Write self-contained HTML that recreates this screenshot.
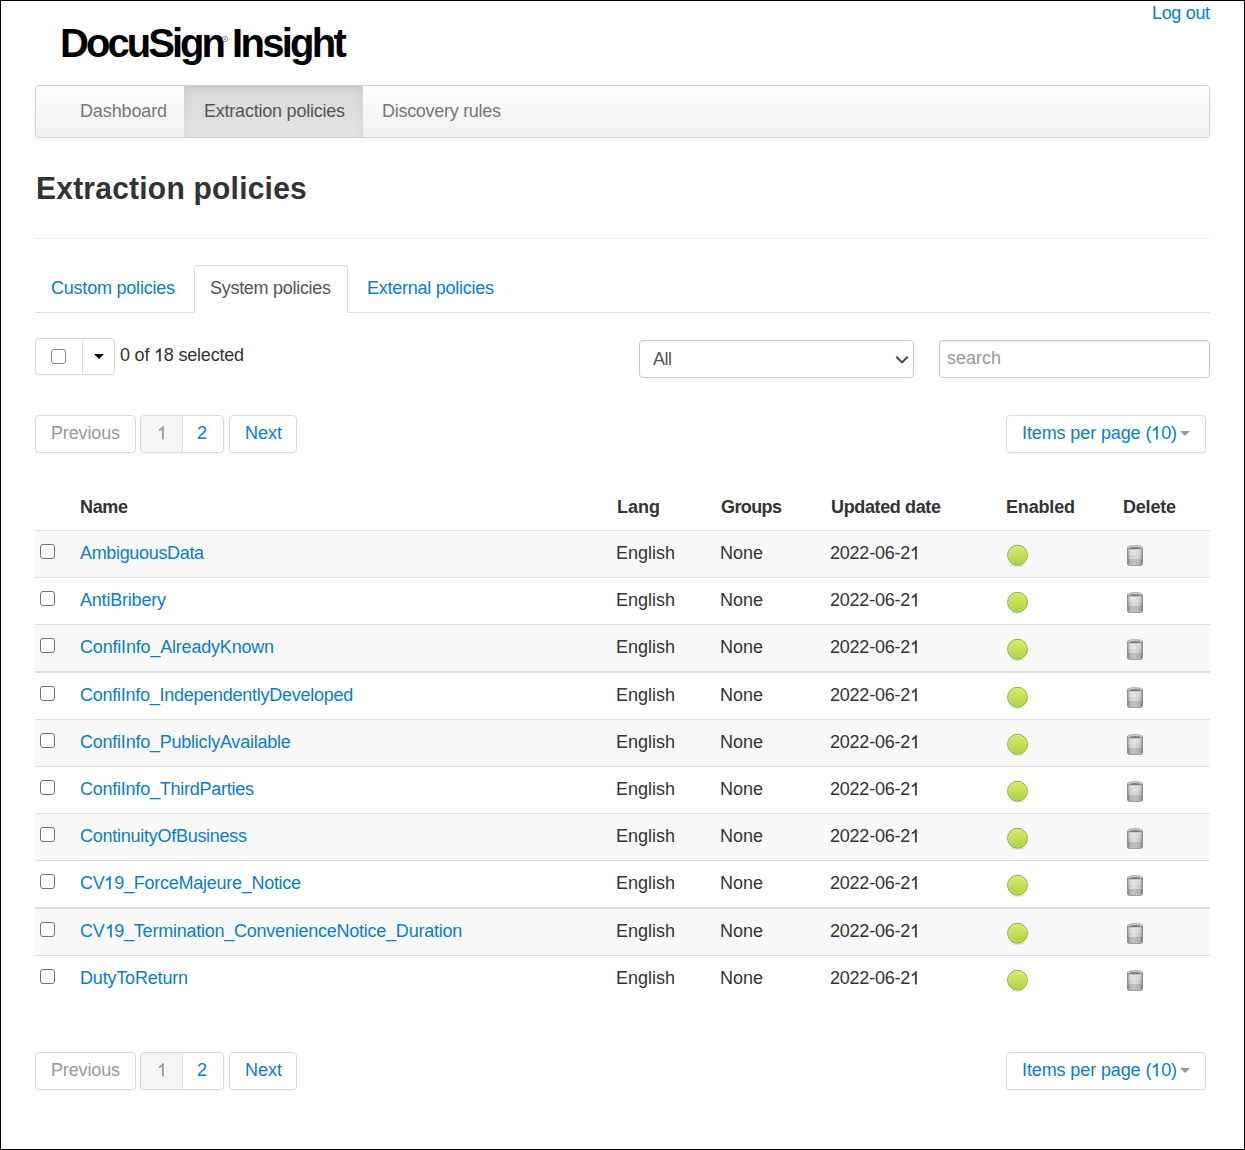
<!DOCTYPE html>
<html><head><meta charset="utf-8"><style>
*{box-sizing:border-box}
html,body{margin:0;padding:0}
body{width:1245px;height:1150px;font-family:"Liberation Sans",sans-serif;font-size:18px;color:#333;background:#fff;position:relative;overflow:hidden}
.a{position:absolute}
.t{position:absolute;line-height:20px;font-size:18px;white-space:nowrap}
.lk{color:#0a7dc8}
.b{font-weight:bold}
.one{position:relative;-webkit-text-fill-color:transparent}
.one svg{position:absolute;left:0;top:-0.2px}
.gray{color:#777}
.logo{position:absolute;font-size:40px;font-weight:bold;color:#000;line-height:46px;white-space:nowrap}
.navbar{left:35px;top:85px;width:1175px;height:53px;border:1px solid #d2d2d2;border-radius:4px;background:linear-gradient(#fff,#f0f0f0);box-shadow:0 1px 5px rgba(0,0,0,.075)}
.act{left:184px;top:86px;width:179px;height:51px;background:linear-gradient(#d9d9d9,#e4e4e4);box-shadow:inset 0 3px 9px rgba(0,0,0,.075)}
.bx{position:absolute;border:1px solid #dadada;border-radius:4px;background:#fff;box-shadow:0 1px 2px rgba(0,0,0,.05)}
.cb{position:absolute;width:15px;height:15px;border:1.6px solid #727272;border-radius:3px;background:#fff}
.line{position:absolute;left:35px;width:1175px;height:1px;background:#ddd}
.stripe{position:absolute;left:35px;width:1175px;background:#f9f9f9}
.dot{position:absolute;width:22px;height:22px;border-radius:50%;background:radial-gradient(ellipse at 50% 35%,#d2e56e 0,#c3dc4f 55%,#aacd2c 100%);border:1px solid #84b32a;box-shadow:0 1px 1px rgba(0,0,0,.15)}
</style></head><body>
<div id="logo1" class="logo" style="left:60px;top:20px;letter-spacing:-2.95px">DocuSign</div>
<div class="a" style="left:222px;top:36px;width:5.5px;height:5.5px;border:1px solid #8a8a8a;border-radius:50%"><div class="a" style="left:1.2px;top:1px;width:1.4px;height:1.8px;background:#aaa"></div></div>
<div id="logo2" class="logo" style="left:232px;top:20px;letter-spacing:-2.7px">Insight</div>
<div id="logout" class="t lk" style="left:1152.00px;top:3px;letter-spacing:-0.333px;">Log out</div>
<div class="a navbar"></div>
<div class="a act"></div>
<div id="nav1" class="t gray" style="left:80.00px;top:101px;letter-spacing:-0.125px;">Dashboard</div>
<div id="nav2" class="t " style="left:204.00px;top:101px;letter-spacing:-0.222px;color:#555">Extraction policies</div>
<div id="nav3" class="t gray" style="left:382.00px;top:101px;letter-spacing:-0.286px;">Discovery rules</div>
<div id="h1" class="a b" style="left:36.00px;top:170px;font-size:30px;line-height:36px;white-space:nowrap;letter-spacing:0.222px;transform:scaleY(1.07);transform-origin:0 20px">Extraction policies</div>
<div class="line" style="top:238px;background:#eee"></div>
<div class="line" style="top:312px"></div>
<div class="a" style="left:194px;top:265px;width:154px;height:48px;border:1px solid #ddd;border-bottom:1px solid #fff;border-radius:4px 4px 0 0;background:#fff"></div>
<div id="tab1" class="t lk" style="left:51.00px;top:278px;letter-spacing:-0.214px;">Custom policies</div>
<div id="tab2" class="t " style="left:210.00px;top:278px;letter-spacing:-0.286px;color:#555">System policies</div>
<div id="tab3" class="t lk" style="left:367.00px;top:278px;letter-spacing:-0.250px;">External policies</div>
<div class="bx" style="left:35px;top:338px;width:80px;height:37px"></div>
<div class="a" style="left:82px;top:339px;width:1px;height:35px;background:#ddd"></div>
<div class="cb" style="left:51px;top:349px;width:15px;height:15px;border-color:#8a8a8a"></div>
<div class="a" style="left:94px;top:354px;width:0;height:0;border-left:5px solid transparent;border-right:5px solid transparent;border-top:5px solid #000"></div>
<div id="sel" class="t " style="left:120.00px;top:345px;letter-spacing:-0.200px;">0 of <span class="one">1<svg width="10.01" height="20.11" viewBox="0 -1854 1139 2288"><path transform="scale(1,-1)" d="M763 0H583V1147Q518 1085 412.5 1023Q307 961 223 930V1104Q374 1175 487 1276Q600 1377 647 1472H763Z" fill="currentColor" stroke="currentColor" stroke-width="28"/></svg></span>8 selected</div>
<div class="bx" style="left:639px;top:340px;width:275px;height:38px;border-color:#c8c8c8;box-shadow:none"></div>
<div id="all" class="t " style="left:653.00px;top:349px;letter-spacing:-0.500px;color:#555">All</div>
<svg class="a" style="left:895px;top:355px" width="14" height="10" viewBox="0 0 14 10"><path d="M1.3 1.8 L7 7.4 L12.7 1.8" fill="none" stroke="#444" stroke-width="2"/></svg>
<div class="bx" style="left:939px;top:340px;width:271px;height:38px;border-color:#c8c8c8;box-shadow:inset 0 1px 1px rgba(0,0,0,.075)"></div>
<div id="search" class="t " style="left:947.00px;top:348px;color:#999">search</div>
<div class="bx" style="left:35px;top:415px;width:101px;height:38px"></div>
<div id="preva" class="t " style="left:51.00px;top:423px;letter-spacing:-0.143px;color:#999">Previous</div>
<div class="bx" style="left:140px;top:415px;width:84px;height:38px;overflow:hidden"><div class="a" style="left:0;top:0;width:42px;height:36px;background:#f5f5f5;border-right:1px solid #ddd"></div></div>
<div id="p1a" class="t " style="left:157.00px;top:423px;color:#999"><span class="one">1<svg width="10.01" height="20.11" viewBox="0 -1854 1139 2288"><path transform="scale(1,-1)" d="M763 0H583V1147Q518 1085 412.5 1023Q307 961 223 930V1104Q374 1175 487 1276Q600 1377 647 1472H763Z" fill="currentColor" stroke="currentColor" stroke-width="28"/></svg></span></div>
<div id="p2a" class="t lk" style="left:197.00px;top:423px;">2</div>
<div class="bx" style="left:229px;top:415px;width:68px;height:38px"></div>
<div id="nexta" class="t lk" style="left:245.00px;top:423px;">Next</div>
<div class="bx" style="left:1006px;top:415px;width:200px;height:38px"></div>
<div id="ippa" class="t lk" style="left:1022.00px;top:423px;letter-spacing:-0.111px;">Items per page (<span class="one">1<svg width="10.01" height="20.11" viewBox="0 -1854 1139 2288"><path transform="scale(1,-1)" d="M763 0H583V1147Q518 1085 412.5 1023Q307 961 223 930V1104Q374 1175 487 1276Q600 1377 647 1472H763Z" fill="currentColor" stroke="currentColor" stroke-width="28"/></svg></span>0)</div>
<div class="a" style="left:1180px;top:431px;width:0;height:0;border-left:5px solid transparent;border-right:5px solid transparent;border-top:5px solid #999"></div>
<div id="hName" class="t b" style="left:80.00px;top:497px;letter-spacing:-0.333px;">Name</div>
<div id="hLang" class="t b" style="left:617.00px;top:497px;">Lang</div>
<div id="hGroups" class="t b" style="left:721.00px;top:497px;letter-spacing:-0.600px;">Groups</div>
<div id="hDate" class="t b" style="left:831.00px;top:497px;letter-spacing:-0.364px;">Updated date</div>
<div id="hEn" class="t b" style="left:1006.00px;top:497px;letter-spacing:-0.167px;">Enabled</div>
<div id="hDel" class="t b" style="left:1123.00px;top:497px;letter-spacing:-0.200px;">Delete</div>
<div class="line" style="top:530px"></div>
<svg width="0" height="0" style="position:absolute"><defs><linearGradient id="dg" x1="0" y1="0" x2="0" y2="1"><stop offset="0" stop-color="#d9ec6e"/><stop offset=".5" stop-color="#c6df58"/><stop offset="1" stop-color="#abcf44"/></linearGradient><linearGradient id="cgb" x1="0" x2="1"><stop offset="0" stop-color="#8c8c8c"/><stop offset=".18" stop-color="#cfcfcf"/><stop offset=".45" stop-color="#dedede"/><stop offset=".82" stop-color="#cacaca"/><stop offset="1" stop-color="#8a8a8a"/></linearGradient></defs></svg>
<div class="stripe" style="top:531px;height:46px"></div>
<div class="cb" style="left:40px;top:544px"></div>
<div id="n0" class="t lk" style="left:80.00px;top:543px;letter-spacing:-0.333px;">AmbiguousData</div>
<div id="e0" class="t " style="left:616.00px;top:543px;">English</div>
<div id="g0" class="t " style="left:720.00px;top:543px;">None</div>
<div id="d0" class="t " style="left:830.00px;top:543px;letter-spacing:-0.222px;">2022-06-2<span class="one">1<svg width="10.01" height="20.11" viewBox="0 -1854 1139 2288"><path transform="scale(1,-1)" d="M763 0H583V1147Q518 1085 412.5 1023Q307 961 223 930V1104Q374 1175 487 1276Q600 1377 647 1472H763Z" fill="currentColor" stroke="currentColor" stroke-width="28"/></svg></span></div>
<svg class="a" style="left:1006px;top:544px" width="23" height="24" viewBox="0 0 23 24"><ellipse cx="11.5" cy="21.3" rx="7" ry="1.6" fill="rgba(0,0,0,.10)"/><circle cx="11.5" cy="11.2" r="9.9" fill="url(#dg)" stroke="#78b42c" stroke-width="1"/><circle cx="11.5" cy="11.2" r="8.9" fill="none" stroke="rgba(255,255,255,.25)" stroke-width=".8"/></svg>
<svg class="a" style="left:1127px;top:545px" width="16" height="21" viewBox="0 0 16 21"><path d="M0.5 2.6 V19 C0.5 20.3 3 20.8 8 20.8 C13 20.8 15.5 20.3 15.5 19 V2.6 Z" fill="url(#cgb)" stroke="#8e8e8e" stroke-width="1"/><path d="M1 14 H15 V18.3 Q15 20.3 8 20.3 Q1 20.3 1 18.3 Z" fill="rgba(0,0,0,.13)"/><rect x="1" y="5" width="14" height="5" fill="rgba(255,255,255,.18)"/><ellipse cx="8" cy="2.6" rx="7.6" ry="2.2" fill="#c9c9c9" stroke="#9a9a9a" stroke-width=".6"/><ellipse cx="8" cy="3.3" rx="6" ry="1.3" fill="#7c7c7c"/><ellipse cx="8" cy="4.9" rx="6" ry=".5" fill="#f4f4f4"/></svg>
<div class="line" style="top:577px;height:1px"></div>
<div class="cb" style="left:40px;top:591px"></div>
<div id="n1" class="t lk" style="left:80.00px;top:590px;letter-spacing:-0.200px;">AntiBribery</div>
<div id="e1" class="t " style="left:616.00px;top:590px;">English</div>
<div id="g1" class="t " style="left:720.00px;top:590px;">None</div>
<div id="d1" class="t " style="left:830.00px;top:590px;letter-spacing:-0.222px;">2022-06-2<span class="one">1<svg width="10.01" height="20.11" viewBox="0 -1854 1139 2288"><path transform="scale(1,-1)" d="M763 0H583V1147Q518 1085 412.5 1023Q307 961 223 930V1104Q374 1175 487 1276Q600 1377 647 1472H763Z" fill="currentColor" stroke="currentColor" stroke-width="28"/></svg></span></div>
<svg class="a" style="left:1006px;top:591px" width="23" height="24" viewBox="0 0 23 24"><ellipse cx="11.5" cy="21.3" rx="7" ry="1.6" fill="rgba(0,0,0,.10)"/><circle cx="11.5" cy="11.2" r="9.9" fill="url(#dg)" stroke="#78b42c" stroke-width="1"/><circle cx="11.5" cy="11.2" r="8.9" fill="none" stroke="rgba(255,255,255,.25)" stroke-width=".8"/></svg>
<svg class="a" style="left:1127px;top:592px" width="16" height="21" viewBox="0 0 16 21"><path d="M0.5 2.6 V19 C0.5 20.3 3 20.8 8 20.8 C13 20.8 15.5 20.3 15.5 19 V2.6 Z" fill="url(#cgb)" stroke="#8e8e8e" stroke-width="1"/><path d="M1 14 H15 V18.3 Q15 20.3 8 20.3 Q1 20.3 1 18.3 Z" fill="rgba(0,0,0,.13)"/><rect x="1" y="5" width="14" height="5" fill="rgba(255,255,255,.18)"/><ellipse cx="8" cy="2.6" rx="7.6" ry="2.2" fill="#c9c9c9" stroke="#9a9a9a" stroke-width=".6"/><ellipse cx="8" cy="3.3" rx="6" ry="1.3" fill="#7c7c7c"/><ellipse cx="8" cy="4.9" rx="6" ry=".5" fill="#f4f4f4"/></svg>
<div class="stripe" style="top:625px;height:46px"></div>
<div class="line" style="top:624px;height:1px"></div>
<div class="cb" style="left:40px;top:638px"></div>
<div id="n2" class="t lk" style="left:80.00px;top:637px;letter-spacing:-0.190px;">ConfiInfo_AlreadyKnown</div>
<div id="e2" class="t " style="left:616.00px;top:637px;">English</div>
<div id="g2" class="t " style="left:720.00px;top:637px;">None</div>
<div id="d2" class="t " style="left:830.00px;top:637px;letter-spacing:-0.222px;">2022-06-2<span class="one">1<svg width="10.01" height="20.11" viewBox="0 -1854 1139 2288"><path transform="scale(1,-1)" d="M763 0H583V1147Q518 1085 412.5 1023Q307 961 223 930V1104Q374 1175 487 1276Q600 1377 647 1472H763Z" fill="currentColor" stroke="currentColor" stroke-width="28"/></svg></span></div>
<svg class="a" style="left:1006px;top:638px" width="23" height="24" viewBox="0 0 23 24"><ellipse cx="11.5" cy="21.3" rx="7" ry="1.6" fill="rgba(0,0,0,.10)"/><circle cx="11.5" cy="11.2" r="9.9" fill="url(#dg)" stroke="#78b42c" stroke-width="1"/><circle cx="11.5" cy="11.2" r="8.9" fill="none" stroke="rgba(255,255,255,.25)" stroke-width=".8"/></svg>
<svg class="a" style="left:1127px;top:639px" width="16" height="21" viewBox="0 0 16 21"><path d="M0.5 2.6 V19 C0.5 20.3 3 20.8 8 20.8 C13 20.8 15.5 20.3 15.5 19 V2.6 Z" fill="url(#cgb)" stroke="#8e8e8e" stroke-width="1"/><path d="M1 14 H15 V18.3 Q15 20.3 8 20.3 Q1 20.3 1 18.3 Z" fill="rgba(0,0,0,.13)"/><rect x="1" y="5" width="14" height="5" fill="rgba(255,255,255,.18)"/><ellipse cx="8" cy="2.6" rx="7.6" ry="2.2" fill="#c9c9c9" stroke="#9a9a9a" stroke-width=".6"/><ellipse cx="8" cy="3.3" rx="6" ry="1.3" fill="#7c7c7c"/><ellipse cx="8" cy="4.9" rx="6" ry=".5" fill="#f4f4f4"/></svg>
<div class="line" style="top:671px;height:2px"></div>
<div class="cb" style="left:40px;top:686px"></div>
<div id="n3" class="t lk" style="left:80.00px;top:685px;letter-spacing:-0.258px;">ConfiInfo_IndependentlyDeveloped</div>
<div id="e3" class="t " style="left:616.00px;top:685px;">English</div>
<div id="g3" class="t " style="left:720.00px;top:685px;">None</div>
<div id="d3" class="t " style="left:830.00px;top:685px;letter-spacing:-0.222px;">2022-06-2<span class="one">1<svg width="10.01" height="20.11" viewBox="0 -1854 1139 2288"><path transform="scale(1,-1)" d="M763 0H583V1147Q518 1085 412.5 1023Q307 961 223 930V1104Q374 1175 487 1276Q600 1377 647 1472H763Z" fill="currentColor" stroke="currentColor" stroke-width="28"/></svg></span></div>
<svg class="a" style="left:1006px;top:686px" width="23" height="24" viewBox="0 0 23 24"><ellipse cx="11.5" cy="21.3" rx="7" ry="1.6" fill="rgba(0,0,0,.10)"/><circle cx="11.5" cy="11.2" r="9.9" fill="url(#dg)" stroke="#78b42c" stroke-width="1"/><circle cx="11.5" cy="11.2" r="8.9" fill="none" stroke="rgba(255,255,255,.25)" stroke-width=".8"/></svg>
<svg class="a" style="left:1127px;top:687px" width="16" height="21" viewBox="0 0 16 21"><path d="M0.5 2.6 V19 C0.5 20.3 3 20.8 8 20.8 C13 20.8 15.5 20.3 15.5 19 V2.6 Z" fill="url(#cgb)" stroke="#8e8e8e" stroke-width="1"/><path d="M1 14 H15 V18.3 Q15 20.3 8 20.3 Q1 20.3 1 18.3 Z" fill="rgba(0,0,0,.13)"/><rect x="1" y="5" width="14" height="5" fill="rgba(255,255,255,.18)"/><ellipse cx="8" cy="2.6" rx="7.6" ry="2.2" fill="#c9c9c9" stroke="#9a9a9a" stroke-width=".6"/><ellipse cx="8" cy="3.3" rx="6" ry="1.3" fill="#7c7c7c"/><ellipse cx="8" cy="4.9" rx="6" ry=".5" fill="#f4f4f4"/></svg>
<div class="stripe" style="top:720px;height:46px"></div>
<div class="line" style="top:719px;height:1px"></div>
<div class="cb" style="left:40px;top:733px"></div>
<div id="n4" class="t lk" style="left:80.00px;top:732px;letter-spacing:-0.231px;">ConfiInfo_PubliclyAvailable</div>
<div id="e4" class="t " style="left:616.00px;top:732px;">English</div>
<div id="g4" class="t " style="left:720.00px;top:732px;">None</div>
<div id="d4" class="t " style="left:830.00px;top:732px;letter-spacing:-0.222px;">2022-06-2<span class="one">1<svg width="10.01" height="20.11" viewBox="0 -1854 1139 2288"><path transform="scale(1,-1)" d="M763 0H583V1147Q518 1085 412.5 1023Q307 961 223 930V1104Q374 1175 487 1276Q600 1377 647 1472H763Z" fill="currentColor" stroke="currentColor" stroke-width="28"/></svg></span></div>
<svg class="a" style="left:1006px;top:733px" width="23" height="24" viewBox="0 0 23 24"><ellipse cx="11.5" cy="21.3" rx="7" ry="1.6" fill="rgba(0,0,0,.10)"/><circle cx="11.5" cy="11.2" r="9.9" fill="url(#dg)" stroke="#78b42c" stroke-width="1"/><circle cx="11.5" cy="11.2" r="8.9" fill="none" stroke="rgba(255,255,255,.25)" stroke-width=".8"/></svg>
<svg class="a" style="left:1127px;top:734px" width="16" height="21" viewBox="0 0 16 21"><path d="M0.5 2.6 V19 C0.5 20.3 3 20.8 8 20.8 C13 20.8 15.5 20.3 15.5 19 V2.6 Z" fill="url(#cgb)" stroke="#8e8e8e" stroke-width="1"/><path d="M1 14 H15 V18.3 Q15 20.3 8 20.3 Q1 20.3 1 18.3 Z" fill="rgba(0,0,0,.13)"/><rect x="1" y="5" width="14" height="5" fill="rgba(255,255,255,.18)"/><ellipse cx="8" cy="2.6" rx="7.6" ry="2.2" fill="#c9c9c9" stroke="#9a9a9a" stroke-width=".6"/><ellipse cx="8" cy="3.3" rx="6" ry="1.3" fill="#7c7c7c"/><ellipse cx="8" cy="4.9" rx="6" ry=".5" fill="#f4f4f4"/></svg>
<div class="line" style="top:766px;height:1px"></div>
<div class="cb" style="left:40px;top:780px"></div>
<div id="n5" class="t lk" style="left:80.00px;top:779px;letter-spacing:-0.238px;">ConfiInfo_ThirdParties</div>
<div id="e5" class="t " style="left:616.00px;top:779px;">English</div>
<div id="g5" class="t " style="left:720.00px;top:779px;">None</div>
<div id="d5" class="t " style="left:830.00px;top:779px;letter-spacing:-0.222px;">2022-06-2<span class="one">1<svg width="10.01" height="20.11" viewBox="0 -1854 1139 2288"><path transform="scale(1,-1)" d="M763 0H583V1147Q518 1085 412.5 1023Q307 961 223 930V1104Q374 1175 487 1276Q600 1377 647 1472H763Z" fill="currentColor" stroke="currentColor" stroke-width="28"/></svg></span></div>
<svg class="a" style="left:1006px;top:780px" width="23" height="24" viewBox="0 0 23 24"><ellipse cx="11.5" cy="21.3" rx="7" ry="1.6" fill="rgba(0,0,0,.10)"/><circle cx="11.5" cy="11.2" r="9.9" fill="url(#dg)" stroke="#78b42c" stroke-width="1"/><circle cx="11.5" cy="11.2" r="8.9" fill="none" stroke="rgba(255,255,255,.25)" stroke-width=".8"/></svg>
<svg class="a" style="left:1127px;top:781px" width="16" height="21" viewBox="0 0 16 21"><path d="M0.5 2.6 V19 C0.5 20.3 3 20.8 8 20.8 C13 20.8 15.5 20.3 15.5 19 V2.6 Z" fill="url(#cgb)" stroke="#8e8e8e" stroke-width="1"/><path d="M1 14 H15 V18.3 Q15 20.3 8 20.3 Q1 20.3 1 18.3 Z" fill="rgba(0,0,0,.13)"/><rect x="1" y="5" width="14" height="5" fill="rgba(255,255,255,.18)"/><ellipse cx="8" cy="2.6" rx="7.6" ry="2.2" fill="#c9c9c9" stroke="#9a9a9a" stroke-width=".6"/><ellipse cx="8" cy="3.3" rx="6" ry="1.3" fill="#7c7c7c"/><ellipse cx="8" cy="4.9" rx="6" ry=".5" fill="#f4f4f4"/></svg>
<div class="stripe" style="top:814px;height:46px"></div>
<div class="line" style="top:813px;height:1px"></div>
<div class="cb" style="left:40px;top:827px"></div>
<div id="n6" class="t lk" style="left:80.00px;top:826px;letter-spacing:-0.263px;">ContinuityOfBusiness</div>
<div id="e6" class="t " style="left:616.00px;top:826px;">English</div>
<div id="g6" class="t " style="left:720.00px;top:826px;">None</div>
<div id="d6" class="t " style="left:830.00px;top:826px;letter-spacing:-0.222px;">2022-06-2<span class="one">1<svg width="10.01" height="20.11" viewBox="0 -1854 1139 2288"><path transform="scale(1,-1)" d="M763 0H583V1147Q518 1085 412.5 1023Q307 961 223 930V1104Q374 1175 487 1276Q600 1377 647 1472H763Z" fill="currentColor" stroke="currentColor" stroke-width="28"/></svg></span></div>
<svg class="a" style="left:1006px;top:827px" width="23" height="24" viewBox="0 0 23 24"><ellipse cx="11.5" cy="21.3" rx="7" ry="1.6" fill="rgba(0,0,0,.10)"/><circle cx="11.5" cy="11.2" r="9.9" fill="url(#dg)" stroke="#78b42c" stroke-width="1"/><circle cx="11.5" cy="11.2" r="8.9" fill="none" stroke="rgba(255,255,255,.25)" stroke-width=".8"/></svg>
<svg class="a" style="left:1127px;top:828px" width="16" height="21" viewBox="0 0 16 21"><path d="M0.5 2.6 V19 C0.5 20.3 3 20.8 8 20.8 C13 20.8 15.5 20.3 15.5 19 V2.6 Z" fill="url(#cgb)" stroke="#8e8e8e" stroke-width="1"/><path d="M1 14 H15 V18.3 Q15 20.3 8 20.3 Q1 20.3 1 18.3 Z" fill="rgba(0,0,0,.13)"/><rect x="1" y="5" width="14" height="5" fill="rgba(255,255,255,.18)"/><ellipse cx="8" cy="2.6" rx="7.6" ry="2.2" fill="#c9c9c9" stroke="#9a9a9a" stroke-width=".6"/><ellipse cx="8" cy="3.3" rx="6" ry="1.3" fill="#7c7c7c"/><ellipse cx="8" cy="4.9" rx="6" ry=".5" fill="#f4f4f4"/></svg>
<div class="line" style="top:860px;height:1px"></div>
<div class="cb" style="left:40px;top:874px"></div>
<div id="n7" class="t lk" style="left:80.00px;top:873px;letter-spacing:-0.261px;">CV<span class="one">1<svg width="10.01" height="20.11" viewBox="0 -1854 1139 2288"><path transform="scale(1,-1)" d="M763 0H583V1147Q518 1085 412.5 1023Q307 961 223 930V1104Q374 1175 487 1276Q600 1377 647 1472H763Z" fill="currentColor" stroke="currentColor" stroke-width="28"/></svg></span>9_ForceMajeure_Notice</div>
<div id="e7" class="t " style="left:616.00px;top:873px;">English</div>
<div id="g7" class="t " style="left:720.00px;top:873px;">None</div>
<div id="d7" class="t " style="left:830.00px;top:873px;letter-spacing:-0.222px;">2022-06-2<span class="one">1<svg width="10.01" height="20.11" viewBox="0 -1854 1139 2288"><path transform="scale(1,-1)" d="M763 0H583V1147Q518 1085 412.5 1023Q307 961 223 930V1104Q374 1175 487 1276Q600 1377 647 1472H763Z" fill="currentColor" stroke="currentColor" stroke-width="28"/></svg></span></div>
<svg class="a" style="left:1006px;top:874px" width="23" height="24" viewBox="0 0 23 24"><ellipse cx="11.5" cy="21.3" rx="7" ry="1.6" fill="rgba(0,0,0,.10)"/><circle cx="11.5" cy="11.2" r="9.9" fill="url(#dg)" stroke="#78b42c" stroke-width="1"/><circle cx="11.5" cy="11.2" r="8.9" fill="none" stroke="rgba(255,255,255,.25)" stroke-width=".8"/></svg>
<svg class="a" style="left:1127px;top:875px" width="16" height="21" viewBox="0 0 16 21"><path d="M0.5 2.6 V19 C0.5 20.3 3 20.8 8 20.8 C13 20.8 15.5 20.3 15.5 19 V2.6 Z" fill="url(#cgb)" stroke="#8e8e8e" stroke-width="1"/><path d="M1 14 H15 V18.3 Q15 20.3 8 20.3 Q1 20.3 1 18.3 Z" fill="rgba(0,0,0,.13)"/><rect x="1" y="5" width="14" height="5" fill="rgba(255,255,255,.18)"/><ellipse cx="8" cy="2.6" rx="7.6" ry="2.2" fill="#c9c9c9" stroke="#9a9a9a" stroke-width=".6"/><ellipse cx="8" cy="3.3" rx="6" ry="1.3" fill="#7c7c7c"/><ellipse cx="8" cy="4.9" rx="6" ry=".5" fill="#f4f4f4"/></svg>
<div class="stripe" style="top:908px;height:47px"></div>
<div class="line" style="top:907px;height:2px"></div>
<div class="cb" style="left:40px;top:922px"></div>
<div id="n8" class="t lk" style="left:80.00px;top:921px;letter-spacing:-0.238px;">CV<span class="one">1<svg width="10.01" height="20.11" viewBox="0 -1854 1139 2288"><path transform="scale(1,-1)" d="M763 0H583V1147Q518 1085 412.5 1023Q307 961 223 930V1104Q374 1175 487 1276Q600 1377 647 1472H763Z" fill="currentColor" stroke="currentColor" stroke-width="28"/></svg></span>9_Termination_ConvenienceNotice_Duration</div>
<div id="e8" class="t " style="left:616.00px;top:921px;">English</div>
<div id="g8" class="t " style="left:720.00px;top:921px;">None</div>
<div id="d8" class="t " style="left:830.00px;top:921px;letter-spacing:-0.222px;">2022-06-2<span class="one">1<svg width="10.01" height="20.11" viewBox="0 -1854 1139 2288"><path transform="scale(1,-1)" d="M763 0H583V1147Q518 1085 412.5 1023Q307 961 223 930V1104Q374 1175 487 1276Q600 1377 647 1472H763Z" fill="currentColor" stroke="currentColor" stroke-width="28"/></svg></span></div>
<svg class="a" style="left:1006px;top:922px" width="23" height="24" viewBox="0 0 23 24"><ellipse cx="11.5" cy="21.3" rx="7" ry="1.6" fill="rgba(0,0,0,.10)"/><circle cx="11.5" cy="11.2" r="9.9" fill="url(#dg)" stroke="#78b42c" stroke-width="1"/><circle cx="11.5" cy="11.2" r="8.9" fill="none" stroke="rgba(255,255,255,.25)" stroke-width=".8"/></svg>
<svg class="a" style="left:1127px;top:923px" width="16" height="21" viewBox="0 0 16 21"><path d="M0.5 2.6 V19 C0.5 20.3 3 20.8 8 20.8 C13 20.8 15.5 20.3 15.5 19 V2.6 Z" fill="url(#cgb)" stroke="#8e8e8e" stroke-width="1"/><path d="M1 14 H15 V18.3 Q15 20.3 8 20.3 Q1 20.3 1 18.3 Z" fill="rgba(0,0,0,.13)"/><rect x="1" y="5" width="14" height="5" fill="rgba(255,255,255,.18)"/><ellipse cx="8" cy="2.6" rx="7.6" ry="2.2" fill="#c9c9c9" stroke="#9a9a9a" stroke-width=".6"/><ellipse cx="8" cy="3.3" rx="6" ry="1.3" fill="#7c7c7c"/><ellipse cx="8" cy="4.9" rx="6" ry=".5" fill="#f4f4f4"/></svg>
<div class="line" style="top:955px;height:1px"></div>
<div class="cb" style="left:40px;top:969px"></div>
<div id="n9" class="t lk" style="left:80.00px;top:968px;letter-spacing:-0.182px;">DutyToReturn</div>
<div id="e9" class="t " style="left:616.00px;top:968px;">English</div>
<div id="g9" class="t " style="left:720.00px;top:968px;">None</div>
<div id="d9" class="t " style="left:830.00px;top:968px;letter-spacing:-0.222px;">2022-06-2<span class="one">1<svg width="10.01" height="20.11" viewBox="0 -1854 1139 2288"><path transform="scale(1,-1)" d="M763 0H583V1147Q518 1085 412.5 1023Q307 961 223 930V1104Q374 1175 487 1276Q600 1377 647 1472H763Z" fill="currentColor" stroke="currentColor" stroke-width="28"/></svg></span></div>
<svg class="a" style="left:1006px;top:969px" width="23" height="24" viewBox="0 0 23 24"><ellipse cx="11.5" cy="21.3" rx="7" ry="1.6" fill="rgba(0,0,0,.10)"/><circle cx="11.5" cy="11.2" r="9.9" fill="url(#dg)" stroke="#78b42c" stroke-width="1"/><circle cx="11.5" cy="11.2" r="8.9" fill="none" stroke="rgba(255,255,255,.25)" stroke-width=".8"/></svg>
<svg class="a" style="left:1127px;top:970px" width="16" height="21" viewBox="0 0 16 21"><path d="M0.5 2.6 V19 C0.5 20.3 3 20.8 8 20.8 C13 20.8 15.5 20.3 15.5 19 V2.6 Z" fill="url(#cgb)" stroke="#8e8e8e" stroke-width="1"/><path d="M1 14 H15 V18.3 Q15 20.3 8 20.3 Q1 20.3 1 18.3 Z" fill="rgba(0,0,0,.13)"/><rect x="1" y="5" width="14" height="5" fill="rgba(255,255,255,.18)"/><ellipse cx="8" cy="2.6" rx="7.6" ry="2.2" fill="#c9c9c9" stroke="#9a9a9a" stroke-width=".6"/><ellipse cx="8" cy="3.3" rx="6" ry="1.3" fill="#7c7c7c"/><ellipse cx="8" cy="4.9" rx="6" ry=".5" fill="#f4f4f4"/></svg>
<div class="bx" style="left:35px;top:1052px;width:101px;height:38px"></div>
<div id="prevb" class="t " style="left:51.00px;top:1060px;letter-spacing:-0.143px;color:#999">Previous</div>
<div class="bx" style="left:140px;top:1052px;width:84px;height:38px;overflow:hidden"><div class="a" style="left:0;top:0;width:42px;height:36px;background:#f5f5f5;border-right:1px solid #ddd"></div></div>
<div id="p1b" class="t " style="left:157.00px;top:1060px;color:#999"><span class="one">1<svg width="10.01" height="20.11" viewBox="0 -1854 1139 2288"><path transform="scale(1,-1)" d="M763 0H583V1147Q518 1085 412.5 1023Q307 961 223 930V1104Q374 1175 487 1276Q600 1377 647 1472H763Z" fill="currentColor" stroke="currentColor" stroke-width="28"/></svg></span></div>
<div id="p2b" class="t lk" style="left:197.00px;top:1060px;">2</div>
<div class="bx" style="left:229px;top:1052px;width:68px;height:38px"></div>
<div id="nextb" class="t lk" style="left:245.00px;top:1060px;">Next</div>
<div class="bx" style="left:1006px;top:1052px;width:200px;height:38px"></div>
<div id="ippb" class="t lk" style="left:1022.00px;top:1060px;letter-spacing:-0.111px;">Items per page (<span class="one">1<svg width="10.01" height="20.11" viewBox="0 -1854 1139 2288"><path transform="scale(1,-1)" d="M763 0H583V1147Q518 1085 412.5 1023Q307 961 223 930V1104Q374 1175 487 1276Q600 1377 647 1472H763Z" fill="currentColor" stroke="currentColor" stroke-width="28"/></svg></span>0)</div>
<div class="a" style="left:1180px;top:1068px;width:0;height:0;border-left:5px solid transparent;border-right:5px solid transparent;border-top:5px solid #999"></div>
<div class="a" style="left:0;top:0;width:1245px;height:1150px;border:1px solid #000"></div>
</body></html>
